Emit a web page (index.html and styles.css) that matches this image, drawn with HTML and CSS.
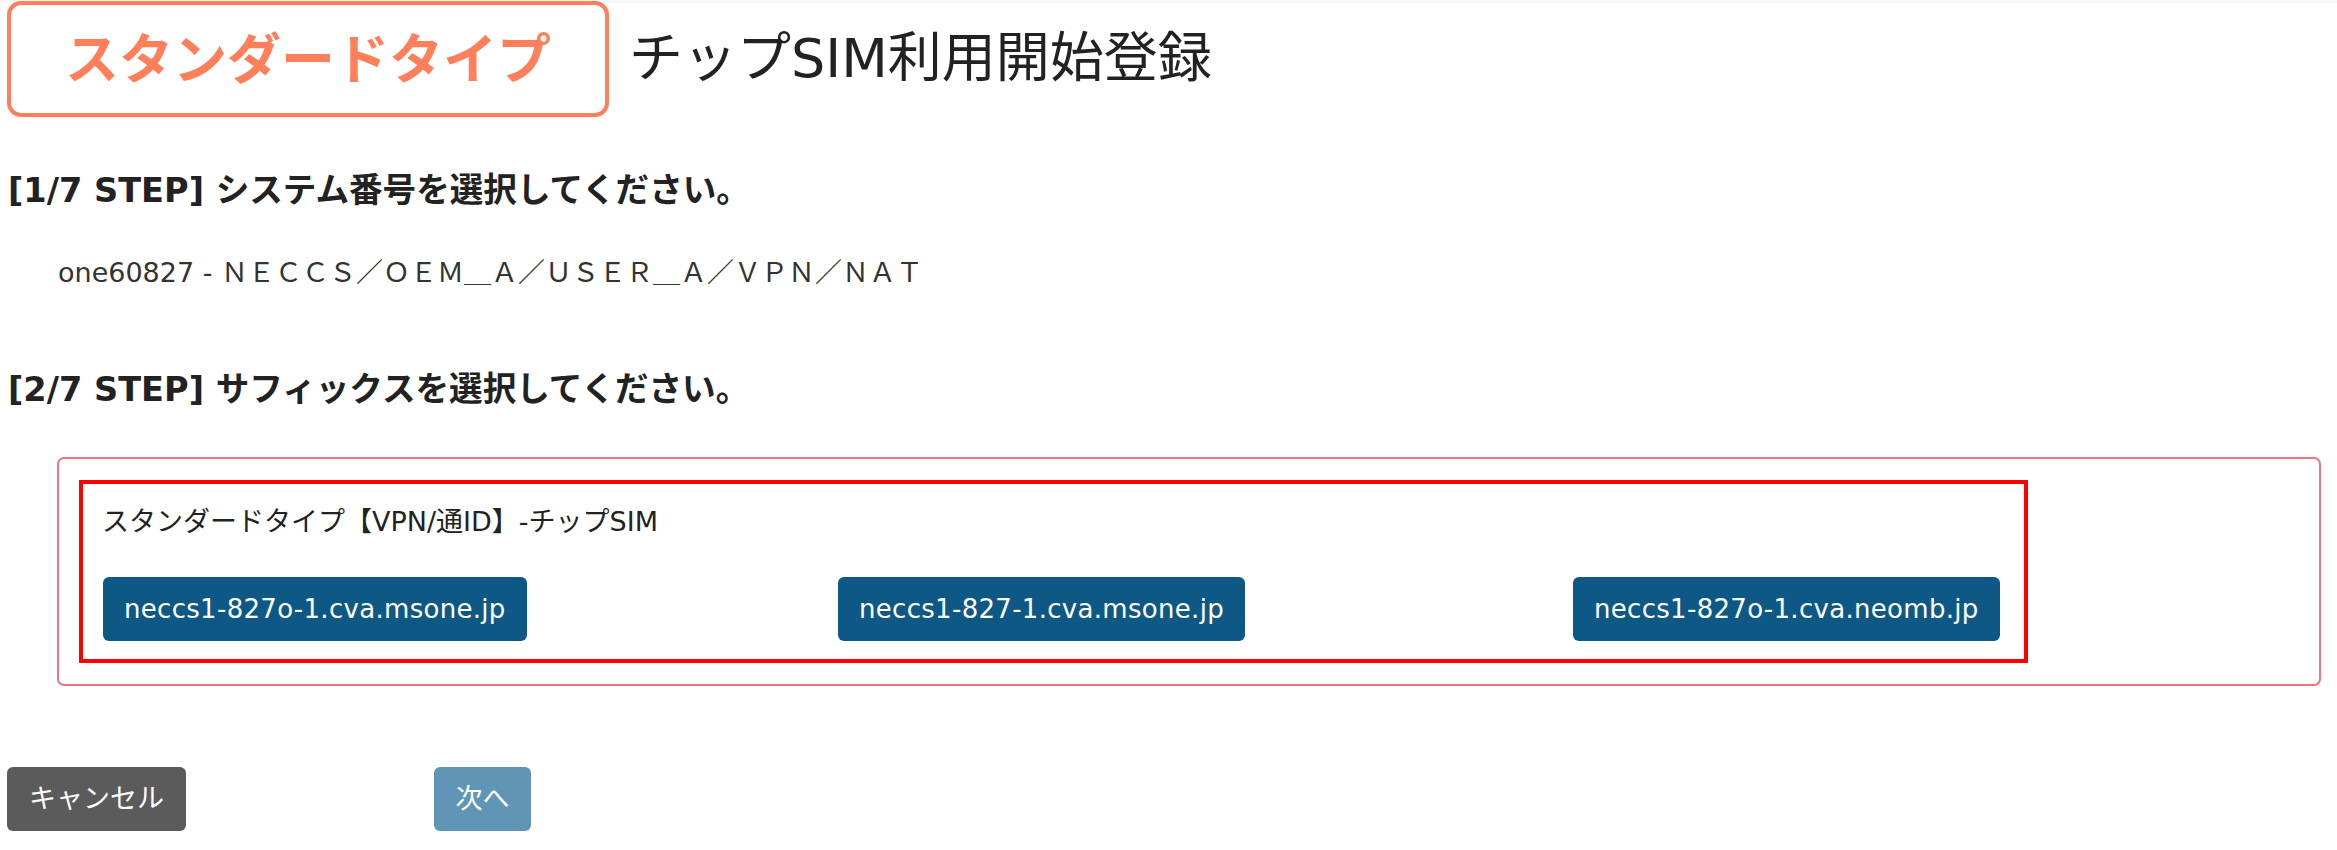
FILE: index.html
```html
<!DOCTYPE html>
<html lang="ja">
<head>
<meta charset="utf-8">
<title>チップSIM利用開始登録</title>
<link rel="stylesheet" href="styles.css">
</head>
<body>
<header class="page-header">
  <div class="type-badge">スタンダードタイプ</div>
  <h1 class="page-title">チップSIM利用開始登録</h1>
</header>

<section class="step">
  <h2 class="step-title">[1/7 STEP] システム番号を選択してください。</h2>
  <p class="step-value">one60827 - ＮＥＣＣＳ／ＯＥＭ＿Ａ／ＵＳＥＲ＿Ａ／ＶＰＮ／ＮＡＴ</p>
</section>

<section class="step step-second">
  <h2 class="step-title">[2/7 STEP] サフィックスを選択してください。</h2>
  <div class="suffix-panel">
    <div class="highlight"></div>
    <p class="suffix-label">スタンダードタイプ【VPN/通ID】-チップSIM</p>
    <div class="suffix-grid">
      <div class="suffix-col"><button class="btn btn-suffix" type="button">neccs1-827o-1.cva.msone.jp</button></div>
      <div class="suffix-col"><button class="btn btn-suffix" type="button">neccs1-827-1.cva.msone.jp</button></div>
      <div class="suffix-col"><button class="btn btn-suffix" type="button">neccs1-827o-1.cva.neomb.jp</button></div>
    </div>
  </div>
</section>

<footer class="actions">
  <button class="btn btn-cancel" type="button">キャンセル</button>
  <button class="btn btn-next" type="button" disabled>次へ</button>
</footer>
</body>
</html>
```

FILE: styles.css
```css
html, body {
  margin: 0;
  padding: 0;
}

body {
  font-family: "DejaVu Sans", "Noto Sans CJK JP", sans-serif;
  font-size: 27px;
  line-height: 40px;
  color: #333333;
  background: linear-gradient(#f6f7f9 0, #f6f7f9 3px, #ffffff 3px) no-repeat;
  background-color: #ffffff;
  width: 2337px;
  height: 850px;
  overflow: hidden;
}

.page-header {
  display: flex;
  align-items: center;
  padding: 1px 0 0 7px;
}

.type-badge {
  box-sizing: border-box;
  width: 602px;
  height: 116px;
  border: 4px solid #ff7f5b;
  border-radius: 14px;
  display: flex;
  align-items: center;
  justify-content: center;
  font-family: "Noto Sans CJK JP", sans-serif;
  font-weight: 700;
  font-size: 54px;
  line-height: 1;
  color: #ff7f5b;
  padding-bottom: 6px;
  background: #ffffff;
}

.page-title {
  margin: 0 0 0 20px;
  font-family: "DejaVu Sans", "Noto Sans CJK JP", sans-serif;
  font-weight: 400;
  font-size: 54px;
  line-height: 70px;
  color: #222222;
}

.step-title {
  margin: 54px 0 0 8px;
  font-size: 33.6px;
  line-height: 40px;
  font-weight: 700;
  color: #222222;
}

.step-value {
  margin: 42px 0 0 58px;
  font-size: 27px;
  line-height: 40px;
  color: #333333;
}

.step-second .step-title {
  margin-top: 77px;
}

.suffix-panel {
  position: relative;
  box-sizing: border-box;
  margin: 47px 16px 0 57px;
  height: 229px;
  border: 2px solid #ec7482;
  border-radius: 7px;
  padding: 43px 43px 43px 43px;
}

.highlight {
  position: absolute;
  left: 20px;
  top: 21px;
  width: 1949px;
  height: 183px;
  box-sizing: border-box;
  border: 4.5px solid #ff0000;
  pointer-events: none;
}

.suffix-label {
  margin: 0;
  font-size: 27px;
  line-height: 40px;
  color: #222222;
}

.suffix-grid {
  display: grid;
  grid-template-columns: repeat(3, 735px);
  margin-top: 35px;
  padding-left: 1px;
}

.btn {
  box-sizing: border-box;
  height: 64px;
  padding: 0 21px;
  border: none;
  border-radius: 6px;
  font-family: "DejaVu Sans", "Noto Sans CJK JP", sans-serif;
  font-size: 27px;
  line-height: 64px;
  color: #ffffff;
  cursor: pointer;
}

.btn-suffix {
  background: #0e5886;
  font-size: 26px;
  letter-spacing: 0.3px;
}

.actions {
  display: flex;
  align-items: center;
  margin-top: 81px;
  padding-left: 7px;
}

.btn-cancel {
  background: #5b5b5b;
  width: 179px;
}

.btn-next {
  background: #6195b5;
  width: 97px;
  margin-left: 248px;
  cursor: default;
}
```
